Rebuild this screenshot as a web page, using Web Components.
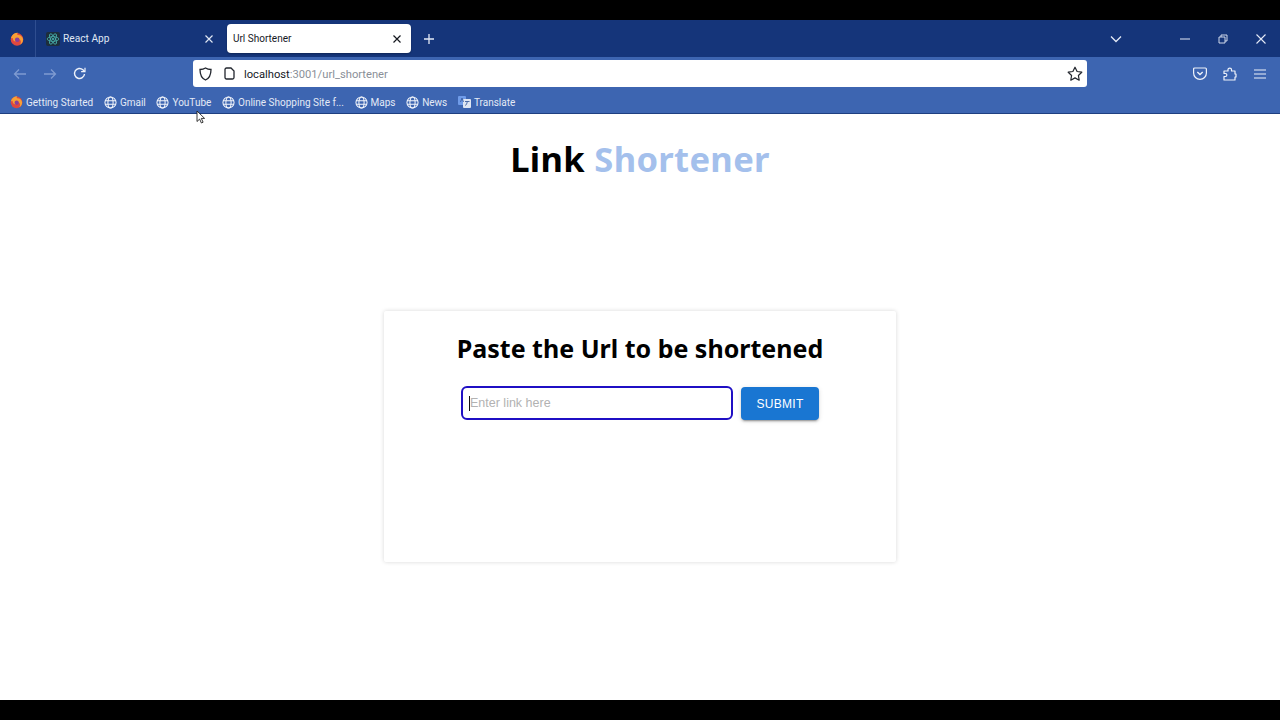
<!DOCTYPE html>
<html>
<head>
<meta charset="utf-8">
<title>Url Shortener</title>
<style>
    html, body { margin: 0; height: 720px; overflow: hidden; background: #000; }
    body { display: flex; flex-direction: column; font-family: Roboto, "Open Sans", "Liberation Sans", sans-serif; }
</style>
</head>
<body>
<browser-window>
    <browser-tab slot="tabs" icon="react">React App</browser-tab>
    <browser-tab slot="tabs" active>Url Shortener</browser-tab>
    <book-mark slot="marks" icon="firefox">Getting Started</book-mark>
    <book-mark slot="marks">Gmail</book-mark>
    <book-mark slot="marks">YouTube</book-mark>
    <book-mark slot="marks">Online Shopping Site f...</book-mark>
    <book-mark slot="marks">Maps</book-mark>
    <book-mark slot="marks">News</book-mark>
    <book-mark slot="marks" icon="translate">Translate</book-mark>
    <shortener-page></shortener-page>
</browser-window>

<script>
const ICONS = {
    firefox: `<svg width="14" height="14" viewBox="0 0 14 14">
        <circle cx="7" cy="7.4" r="6.3" fill="#e0483f"/>
        <path d="M1 6C2 2.5 5 .6 8 .8 7 1.6 7 2.4 7.6 3 10 2.6 12.6 4.4 13 7c.4 3-1.6 5-3 5.6 1.2-1.6 1.2-3.600 0-4.800-.8-.8-2-1-3-.6C5.600 7.800 5.400 9 6.400 9.600 4 9.800 2.400 8 3 6 2.400 6.400 1.600 6.400 1 6z" fill="#f7a035"/>
        <circle cx="7.200" cy="7.800" r="2.300" fill="#8a3f9a"/>
    </svg>`,
    globe: `<svg width="13" height="13" viewBox="0 0 14 14" fill="none" stroke="#f2f5fb" stroke-width="1.100">
        <circle cx="7" cy="7" r="6"/>
        <ellipse cx="7" cy="7" rx="2.800" ry="6"/>
        <path d="M1.200 5h11.600M1.200 9h11.600"/>
    </svg>`,
    translate: `<svg width="13" height="12" viewBox="0 0 13 12">
        <rect x="0" y="0" width="8" height="9" rx="1" fill="#6f9be8"/>
        <rect x="5" y="3" width="8" height="9" rx="1" fill="#dfe6f2"/>
        <path d="M2.500 6l1.500-4 1.500 4M7 5.500h4.500M9.200 5.500c0 2-1 3.500-2 4" fill="none" stroke="#3c5f9f" stroke-width=".9"/>
    </svg>`,
    react: `<svg width="14" height="14" viewBox="0 0 14 14" fill="none" stroke="#49b6b0" stroke-width=".8">
        <rect width="14" height="14" rx="2" fill="#1d2e3c" stroke="none"/>
        <ellipse cx="7" cy="7" rx="5.800" ry="2.300"/>
        <ellipse cx="7" cy="7" rx="5.800" ry="2.300" transform="rotate(60 7 7)"/>
        <ellipse cx="7" cy="7" rx="5.800" ry="2.300" transform="rotate(120 7 7)"/>
        <circle cx="7" cy="7" r="1.100" fill="#49b6b0" stroke="none"/>
    </svg>`
};

class BrowserTab extends HTMLElement {
    constructor() {
        super();
        this.attachShadow({ mode: 'open' });
    }

    connectedCallback() {
        const icon = this.getAttribute('icon');
        this.shadowRoot.innerHTML = `
            <style>
                :host {
                    display: flex;
                    align-items: center;
                    box-sizing: border-box;
                    width: 186px;
                    height: 29px;
                    padding: 0 8px 0 10px;
                    color: #dfe6f3;
                    font-size: 10.200px;
                    border-radius: 4px;
                }
                :host([active]) {
                    background: #fff;
                    color: #15181f;
                    padding: 0 9px 0 6px;
                    width: 184px;
                    font-size: 10px;
                    box-shadow: 0 1px 2px rgba(0, 0, 0, .3);
                }
                .icon { display: flex; margin-right: 3px; }
                .label { flex: 1; white-space: nowrap; }
                svg { display: block; }
            </style>
            ${icon ? `<span class="icon">${ICONS[icon]}</span>` : ''}
            <span class="label"><slot></slot></span>
            <svg width="10" height="10" viewBox="0 0 10 10" fill="none" stroke="currentColor" stroke-width="1.200">
                <path d="M1.500 1.500l7 7M8.500 1.500l-7 7"/>
            </svg>
        `;
    }
}

class BookMark extends HTMLElement {
    constructor() {
        super();
        this.attachShadow({ mode: 'open' });
    }

    connectedCallback() {
        const icon = this.getAttribute('icon') || 'globe';
        this.shadowRoot.innerHTML = `
            <style>
                :host {
                    display: inline-flex;
                    align-items: center;
                    gap: 3px;
                    color: #e4eaf6;
                    font-size: 10px;
                    white-space: nowrap;
                }
                svg { display: block; width: 13px; }
            </style>
            ${ICONS[icon]}
            <span><slot></slot></span>
        `;
    }
}

class BrowserWindow extends HTMLElement {
    constructor() {
        super();
        this.attachShadow({ mode: 'open' });
    }

    connectedCallback() {
        this.shadowRoot.innerHTML = `
            <style>
                :host {
                    display: flex;
                    flex-direction: column;
                    position: relative;
                    height: 720px;
                    padding: 20px 0;
                    box-sizing: border-box;
                    background: #000;
                }
                svg { display: block; }
                .tabs {
                    display: flex;
                    align-items: center;
                    height: 37px;
                    background: #15357a;
                    color: #e4eaf6;
                }
                .logo { width: 35px; display: flex; justify-content: center; padding-right: 2px; box-sizing: border-box; }
                .sep { width: 1px; height: 37px; background: #2f4e90; }
                .tabstrip { display: flex; align-items: center; gap: 5px; }
                .plus { margin-left: 12px; }
                .spring { flex: 1; }
                .chevron { margin-right: 58px; }
                .controls { display: flex; align-items: center; gap: 28px; margin-right: 14px; }
                .toolbar {
                    display: flex;
                    align-items: center;
                    height: 33px;
                    background: #3d65b1;
                    color: #eef2fa;
                }
                .nav { display: flex; align-items: center; gap: 20px; padding-left: 13px; width: 193px; box-sizing: border-box; }
                .urlbar {
                    display: flex;
                    align-items: center;
                    width: 894px;
                    height: 27px;
                    padding: 0 4px 0 6px;
                    box-sizing: border-box;
                    background: #fff;
                    border-radius: 3px;
                    font-size: 11.200px;
                    color: #8a8f98;
                }
                .urlbar .host { color: #15181f; }
                .urlbar .text { flex: 1; margin-left: 9px; padding-top: 1px; }
                .urlbar .page { margin-left: 12px; }
                .actions { display: flex; align-items: center; gap: 16px; margin-left: 106px; }
                .actions .menu { margin-left: 1px; }
                .marks {
                    display: flex;
                    align-items: center;
                    gap: 10.700px;
                    height: 24px;
                    padding: 1px 0 0 10px;
                    box-sizing: border-box;
                    background: #3d65b1;
                    border-bottom: 1px solid #1f3f80;
                }
                .content { flex: 1; display: flex; min-height: 0; background: #fff; }
                .cursor { position: absolute; left: 196px; top: 110px; }
            </style>
            <div class="tabs">
                <div class="logo">${ICONS.firefox}</div>
                <div class="sep"></div>
                <div class="tabstrip"><slot name="tabs"></slot></div>
                <svg class="plus" width="12" height="12" viewBox="0 0 12 12" stroke="currentColor" stroke-width="1.300"><path d="M6 1v10M1 6h10"/></svg>
                <div class="spring"></div>
                <svg class="chevron" width="12" height="8" viewBox="0 0 12 8" fill="none" stroke="currentColor" stroke-width="1.300"><path d="M1 1.500l5 5 5-5"/></svg>
                <div class="controls">
                    <svg width="10" height="10" viewBox="0 0 10 10" stroke="currentColor"><path d="M0 5h10"/></svg>
                    <svg width="10" height="10" viewBox="0 0 10 10" fill="none" stroke="currentColor" stroke-width=".9"><path d="M1 3h6v6H1zM3 3V1h6v6H7"/></svg>
                    <svg width="10" height="10" viewBox="0 0 10 10" stroke="currentColor" stroke-width="1.100"><path d="M.5.5l9 9M9.500.5l-9 9"/></svg>
                </div>
            </div>
            <div class="toolbar">
                <div class="nav">
                    <svg width="13" height="12" viewBox="0 0 13 12" fill="none" stroke="#7f9bd1" stroke-width="1.300"><path d="M13 6H1.500M6 1.500L1.500 6 6 10.500"/></svg>
                    <svg width="13" height="12" viewBox="0 0 13 12" fill="none" stroke="#7f9bd1" stroke-width="1.300" style="margin-left:-2px"><path d="M0 6h11.500M7 1.500L11.500 6 7 10.500"/></svg>
                    <svg width="13" height="13" viewBox="0 0 13 13" fill="none" stroke="currentColor" stroke-width="1.400" style="margin-left:-4px"><path d="M11.500 7a5 5 0 1 1-1.600-4.200L11.500 4.300"/><path d="M12 .8v3.900H8.100" stroke-width="1.200"/></svg>
                </div>
                <div class="urlbar">
                    <svg width="13" height="14" viewBox="0 0 13 14" fill="none" stroke="#22262e" stroke-width="1.300"><path d="M6.500 1c1.500 1 3.500 1.500 5.500 1.500C12 8 10 11.500 6.500 13 3 11.500 1 8 1 2.500 3 2.500 5 2 6.500 1z"/></svg>
                    <svg class="page" width="11" height="13" viewBox="0 0 11 13" fill="none" stroke="#22262e" stroke-width="1.300"><path d="M1 2.500A1.500 1.500 0 0 1 2.500 1H7l3 3v6.500A1.500 1.500 0 0 1 8.500 12h-6A1.500 1.500 0 0 1 1 10.500z"/></svg>
                    <span class="text"><span class="host">localhost</span>:3001/url_shortener</span>
                    <svg width="16" height="15" viewBox="0 0 16 15" fill="none" stroke="#22262e" stroke-width="1.200" stroke-linejoin="round"><path d="M8 1.200l2.100 4.300 4.700.7-3.400 3.300.8 4.700L8 11.900l-4.200 2.300.8-4.700L1.200 6.200l4.700-.7z"/></svg>
                </div>
                <div class="actions">
                    <svg width="14" height="13" viewBox="0 0 14 13" fill="none" stroke="currentColor" stroke-width="1.200"><path d="M1.600 1h10.800a1 1 0 0 1 1 1v4a6.400 6.400 0 0 1-12.800 0V2a1 1 0 0 1 1-1z"/><path d="M4.300 5l2.700 2.500L9.700 5" stroke-width="1.400"/></svg>
                    <svg width="14" height="14" viewBox="0 0 14 14" fill="none" stroke="currentColor" stroke-width="1.200" stroke-linejoin="round"><path d="M1 13V9.500h1.500c1.800 0 1.800-3 0-3H1V4h4V2.600c0-2.100 3.500-2.100 3.500 0V4H12v3H13v3h-1v3z"/></svg>
                    <svg class="menu" width="12" height="10" viewBox="0 0 12 10" stroke="currentColor" stroke-width="1.200"><path d="M0 1h12M0 5h12M0 9h12"/></svg>
                </div>
            </div>
            <div class="marks"><slot name="marks"></slot></div>
            <div class="content"><slot></slot></div>
            <svg class="cursor" width="10" height="14" viewBox="0 0 10 14"><path d="M1 1v10.500l2.600-2.400 1.800 3.900 1.700-.8-1.800-3.800H8.600z" fill="#fff" stroke="#222" stroke-width=".9"/></svg>
        `;
    }
}

class LinkField extends HTMLElement {
    constructor() {
        super();
        this.attachShadow({ mode: 'open' });
    }

    connectedCallback() {
        this.shadowRoot.innerHTML = `
            <style>
                :host {
                    display: flex;
                    align-items: center;
                    box-sizing: border-box;
                    width: 272px;
                    height: 34px;
                    padding-left: 6px;
                    border: 2px solid #1f0fc4;
                    border-radius: 6px;
                    background: #fff;
                    color: #b2b2b2;
                    font-family: "Liberation Sans", Arial, sans-serif;
                    font-size: 12.500px;
                }
                .caret { width: 1px; height: 15px; background: #111; }
            </style>
            <span class="caret"></span>
            <span><slot></slot></span>
        `;
    }
}

class SubmitButton extends HTMLElement {
    constructor() {
        super();
        this.attachShadow({ mode: 'open' });
    }

    connectedCallback() {
        this.shadowRoot.innerHTML = `
            <style>
                :host {
                    display: flex;
                    align-items: center;
                    justify-content: center;
                    box-sizing: border-box;
                    width: 78px;
                    height: 33px;
                    background: #1976d2;
                    color: #fff;
                    border-radius: 4px;
                    font-family: "Liberation Sans", Arial, sans-serif;
                    font-size: 12px;
                    letter-spacing: .3px;
                    box-shadow: 0 3px 1px -2px rgba(0,0,0,.2), 0 2px 2px 0 rgba(0,0,0,.14), 0 1px 5px 0 rgba(0,0,0,.12);
                }
            </style>
            <slot></slot>
        `;
    }
}

class ShortenerPage extends HTMLElement {
    constructor() {
        super();
        this.attachShadow({ mode: 'open' });
    }

    connectedCallback() {
        this.shadowRoot.innerHTML = `
            <style>
                :host {
                    flex: 1;
                    display: flex;
                    flex-direction: column;
                    align-items: center;
                    font-family: "Noto Sans", "Open Sans", sans-serif;
                    color: #000;
                }
                h1 {
                    margin: 21px 0 0;
                    height: 48px;
                    line-height: 48px;
                    font-size: 34.500px;
                    font-weight: 700;
                    letter-spacing: .35px;
                }
                h1 span { color: #a4c0ec; }
                .card {
                    display: flex;
                    flex-direction: column;
                    align-items: center;
                    box-sizing: border-box;
                    width: 512px;
                    height: 251px;
                    margin-top: 128px;
                    padding-top: 17px;
                    background: #fff;
                    box-shadow: 0 0 4px rgba(0, 0, 0, .16);
                    border-radius: 2px;
                }
                h2 {
                    margin: 0;
                    height: 40px;
                    line-height: 40px;
                    font-size: 25px;
                    font-weight: 700;
                }
                .row {
                    display: flex;
                    align-items: flex-start;
                    gap: 8px;
                    margin-top: 18px;
                }
                submit-button { margin-top: 1px; }
            </style>
            <h1>Link <span>Shortener</span></h1>
            <div class="card">
                <h2>Paste the Url to be shortened</h2>
                <div class="row">
                    <link-field>Enter link here</link-field>
                    <submit-button>SUBMIT</submit-button>
                </div>
            </div>
        `;
    }
}

customElements.define('browser-tab', BrowserTab);
customElements.define('book-mark', BookMark);
customElements.define('browser-window', BrowserWindow);
customElements.define('link-field', LinkField);
customElements.define('submit-button', SubmitButton);
customElements.define('shortener-page', ShortenerPage);
</script>
</body>
</html>
